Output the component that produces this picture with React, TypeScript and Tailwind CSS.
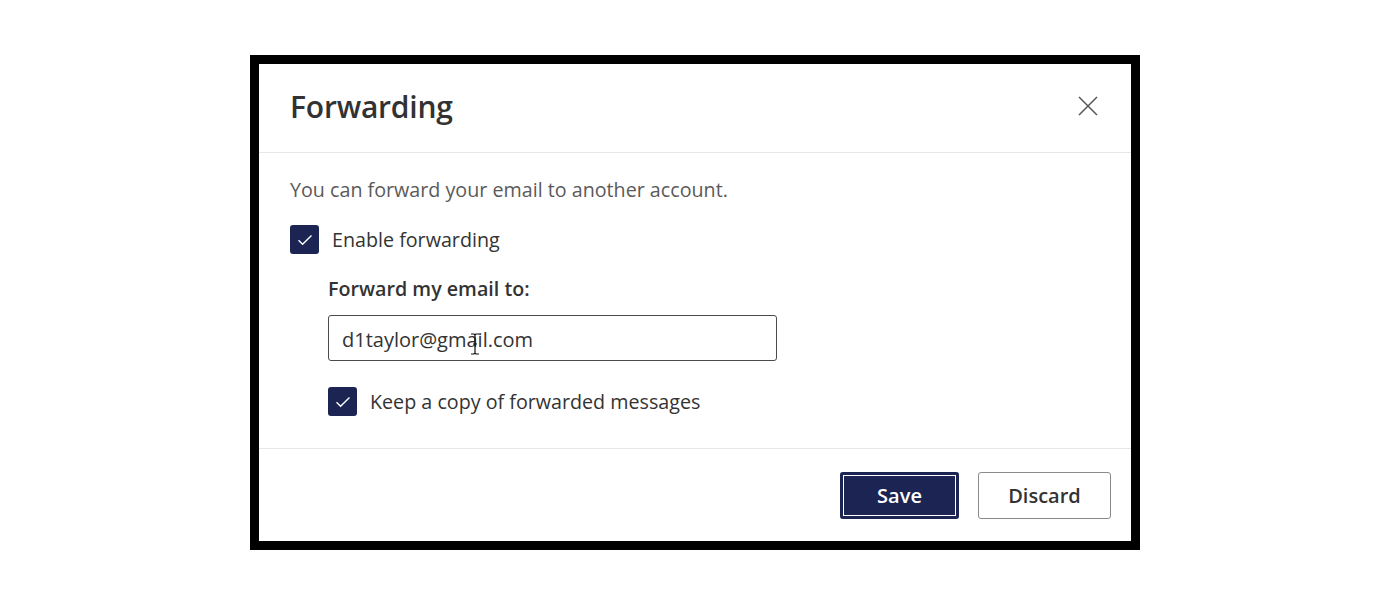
import { useState } from "react";

function Check({ checked, onClick }: { checked: boolean; onClick: () => void }) {
  return (
    <button
      onClick={onClick}
      className={
        "flex h-[29px] w-[29px] shrink-0 items-center justify-center rounded-[3px] " +
        (checked ? "bg-[#1b2453]" : "border border-[#555] bg-white")
      }
    >
      {checked && (
        <svg width="16" height="12" viewBox="0 0 16 12" fill="none">
          <path d="M1.5 6.2 5.6 10.2 14.5 1.5" stroke="white" strokeWidth="1.4" />
        </svg>
      )}
    </button>
  );
}

export default function App() {
  const [enabled, setEnabled] = useState(true);
  const [keepCopy, setKeepCopy] = useState(true);
  const [email, setEmail] = useState("d1taylor@gmail.com");

  return (
    <div className="flex h-screen w-full items-start justify-center bg-white pt-[55px] font-['Open_Sans',sans-serif]">
      <div className="w-[890px] border-[9px] border-black bg-white">
        {/* header */}
        <div className="flex h-[89px] items-center justify-between border-b border-[#e6e6e6] pb-[4px] pl-[31px] pr-[33px]">
          <h1 className="text-[30px] font-semibold tracking-[-0.2px] text-[#323232]">Forwarding</h1>
          <button className="text-[#555]">
            <svg width="20" height="20" viewBox="0 0 20 20" fill="none">
              <path d="M1 1 19 19M19 1 1 19" stroke="currentColor" strokeWidth="1.5" />
            </svg>
          </button>
        </div>

        {/* body */}
        <div className="border-b border-[#e6e6e6] pb-[32px] pl-[31px] pt-[25px]">
          <p className="text-[19.7px] leading-[24px] text-[#5a5a5a]">
            You can forward your email to another account.
          </p>

          <label className="mt-[23px] flex items-center gap-[13px]">
            <Check checked={enabled} onClick={() => setEnabled(!enabled)} />
            <span className="text-[19.7px] leading-[24px] text-[#333]">Enable forwarding</span>
          </label>

          <div className="ml-[38px]">
            <div className="mt-[23px] text-[19.7px] font-semibold leading-[24px] text-[#333]">
              Forward my email to:
            </div>

            <div className="relative mt-[14px] w-[449px]">
              <input
                value={email}
                onChange={(e) => setEmail(e.target.value)}
                className="h-[46px] w-full rounded-[3px] border-[1.5px] border-[#4a4a4a] px-[13px] pt-[3px] text-[20px] text-[#333] outline-none"
              />
              {/* text cursor */}
              <svg
                className="pointer-events-none absolute left-[142px] top-[18px]"
                width="10"
                height="22"
                viewBox="0 0 10 22"
                fill="none"
              >
                <path d="M1 1h3l1 1 1-1h3M5 2v18M1 21h3l1-1 1 1h3M3 11h4" stroke="#111" strokeWidth="1.2" />
              </svg>
            </div>

            <label className="mt-[26px] flex items-center gap-[13px]">
              <Check checked={keepCopy} onClick={() => setKeepCopy(!keepCopy)} />
              <span className="text-[19.7px] leading-[24px] text-[#333]">Keep a copy of forwarded messages</span>
            </label>
          </div>
        </div>

        {/* footer */}
        <div className="flex justify-end gap-[19px] pb-[22px] pr-[20px] pt-[23px]">
          <button className="h-[47px] w-[119px] rounded-[3px] bg-[#1b2453] text-[20px] font-semibold text-white shadow-[inset_0_0_0_3px_#1b2453,inset_0_0_0_4px_white]">
            Save
          </button>
          <button className="h-[47px] w-[133px] rounded-[3px] border border-[#8a8a8a] bg-white text-[20px] font-semibold text-[#333]">
            Discard
          </button>
        </div>
      </div>
    </div>
  );
}
